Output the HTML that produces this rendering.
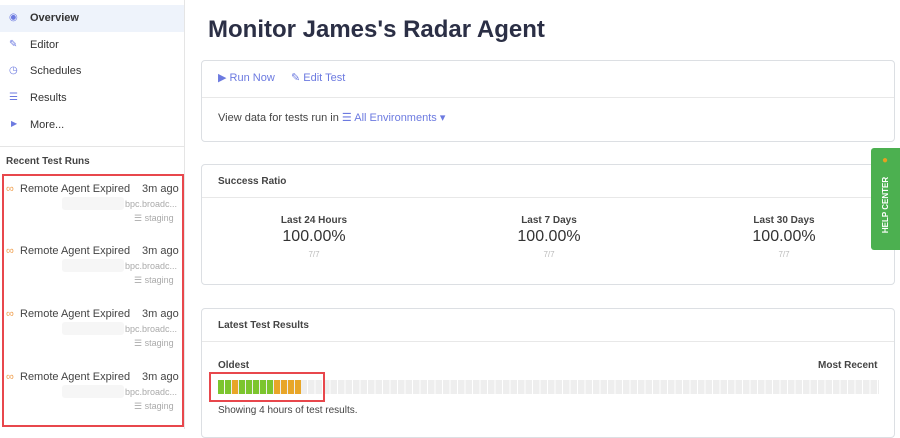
<!DOCTYPE html>
<html><head><meta charset="utf-8"><style>
*{margin:0;padding:0;box-sizing:border-box}
body{width:900px;height:429px;overflow:hidden;background:#fff;font-family:"Liberation Sans",sans-serif;position:relative;color:#444}
.a{position:absolute;white-space:nowrap}
.nav{font-size:11px;color:#333}
.card{position:absolute;left:201px;width:694px;border:1px solid #dcdfe3;border-radius:4px;background:#fff}
.blue{color:#6c7ae0}
.lbl{font-size:10px;font-weight:bold;color:#444}
.big{font-size:16px;color:#333}
.sm{font-size:8px;color:#bbb}
.run{font-size:11px;color:#444}
.gray{font-size:9px;color:#aaa}
.blur{position:absolute;background:#f6f6f6;height:13px;width:62px;left:62px;border-radius:3px}
</style></head><body>
<div class="a" style="left:0;top:0;width:185px;height:429px;border-right:1px solid #e5e5e5"></div>
<div class="a" style="left:0;top:5px;width:184px;height:27px;background:#eef3fb"></div>
<div class="a nav" style="left:9px;top:12px;color:#6c7ae0;font-size:10px">&#9673;</div>
<div class="a nav" style="left:30px;top:12px;font-weight:bold">Overview</div>
<div class="a nav" style="left:9px;top:39px;color:#6c7ae0;font-size:10px">&#9998;</div>
<div class="a nav" style="left:30px;top:39px">Editor</div>
<div class="a nav" style="left:9px;top:65px;color:#6c7ae0;font-size:10px">&#9719;</div>
<div class="a nav" style="left:30px;top:65px">Schedules</div>
<div class="a nav" style="left:9px;top:92px;color:#6c7ae0;font-size:10px">&#9776;</div>
<div class="a nav" style="left:30px;top:92px">Results</div>
<div class="a nav" style="left:11px;top:119px;color:#6c7ae0;font-size:8px">&#9654;</div>
<div class="a nav" style="left:30px;top:119px">More...</div>
<div class="a" style="left:0;top:146px;width:185px;border-top:1px solid #e5e5e5"></div>
<div class="a" style="left:6px;top:156px;font-size:10px;font-weight:bold;color:#444">Recent Test Runs</div>
<div class="a" style="left:2px;top:174px;width:182px;height:253px;border:2px solid #e8474c"></div>

<div class="a" style="left:0;top:183px;width:185px;height:62px">
<div class="a run" style="left:6px;top:0;color:#f0a050">&#8734;</div><div class="a run" style="left:20px;top:0">Remote Agent Expired</div><div class="a run" style="left:142px;top:0">3m ago</div>
<div class="blur" style="top:14px"></div><div class="a gray" style="left:125px;top:16px">bpc.broadc...</div>
<div class="a gray" style="left:134px;top:30px">&#9776; staging</div></div>
<div class="a" style="left:0;top:245px;width:185px;height:62px">
<div class="a run" style="left:6px;top:0;color:#f0a050">&#8734;</div><div class="a run" style="left:20px;top:0">Remote Agent Expired</div><div class="a run" style="left:142px;top:0">3m ago</div>
<div class="blur" style="top:14px"></div><div class="a gray" style="left:125px;top:16px">bpc.broadc...</div>
<div class="a gray" style="left:134px;top:30px">&#9776; staging</div></div>
<div class="a" style="left:0;top:308px;width:185px;height:62px">
<div class="a run" style="left:6px;top:0;color:#f0a050">&#8734;</div><div class="a run" style="left:20px;top:0">Remote Agent Expired</div><div class="a run" style="left:142px;top:0">3m ago</div>
<div class="blur" style="top:14px"></div><div class="a gray" style="left:125px;top:16px">bpc.broadc...</div>
<div class="a gray" style="left:134px;top:30px">&#9776; staging</div></div>
<div class="a" style="left:0;top:371px;width:185px;height:56px">
<div class="a run" style="left:6px;top:0;color:#f0a050">&#8734;</div><div class="a run" style="left:20px;top:0">Remote Agent Expired</div><div class="a run" style="left:142px;top:0">3m ago</div>
<div class="blur" style="top:14px"></div><div class="a gray" style="left:125px;top:16px">bpc.broadc...</div>
<div class="a gray" style="left:134px;top:30px">&#9776; staging</div></div>

<div class="a" style="left:208px;top:16px;font-size:24px;font-weight:bold;color:#2b2f45">Monitor James's Radar Agent</div>

<div class="card" style="top:60px;height:82px">
<div class="a blue" style="left:16px;top:10px;font-size:11px">&#9654; Run Now</div>
<div class="a blue" style="left:89px;top:10px;font-size:11px">&#9998; Edit Test</div>
<div class="a" style="left:0;top:36px;width:692px;border-top:1px solid #e8e8e8"></div>
<div class="a" style="left:16px;top:50px;font-size:11px;color:#444">View data for tests run in <span class="blue">&#9776; All Environments &#9662;</span></div>
</div>

<div class="card" style="top:164px;height:121px">
<div class="a lbl" style="left:16px;top:11px">Success Ratio</div>
<div class="a" style="left:0;top:32px;width:692px;border-top:1px solid #e8e8e8"></div>
<div class="a" style="left:37px;top:50px;width:150px;text-align:center"><div class="lbl">Last 24 Hours</div><div class="big" style="margin-top:2px">100.00%</div><div class="sm" style="margin-top:4px">7/7</div></div>
<div class="a" style="left:272px;top:50px;width:150px;text-align:center"><div class="lbl">Last 7 Days</div><div class="big" style="margin-top:2px">100.00%</div><div class="sm" style="margin-top:4px">7/7</div></div>
<div class="a" style="left:507px;top:50px;width:150px;text-align:center"><div class="lbl">Last 30 Days</div><div class="big" style="margin-top:2px">100.00%</div><div class="sm" style="margin-top:4px">7/7</div></div>
</div>

<div class="card" style="top:308px;height:130px">
<div class="a lbl" style="left:16px;top:11px">Latest Test Results</div>
<div class="a" style="left:0;top:32px;width:692px;border-top:1px solid #e8e8e8"></div>
<div class="a lbl" style="left:16px;top:51px">Oldest</div>
<div class="a lbl" style="left:616px;top:51px">Most Recent</div>
<div class="a" style="left:16px;top:71px;width:661px;height:14px;background:repeating-linear-gradient(90deg,#eeeeee 0 6.5px,#fff 6.5px 7.5px)"></div>
<div class="a" style="left:16px;top:71px;height:14px;display:flex;gap:1px">
<i style="width:6px;background:#7cc52e"></i><i style="width:6px;background:#7cc52e"></i><i style="width:6px;background:#e8a628"></i><i style="width:6px;background:#7cc52e"></i><i style="width:6px;background:#7cc52e"></i><i style="width:6px;background:#7cc52e"></i><i style="width:6px;background:#7cc52e"></i><i style="width:6px;background:#7cc52e"></i><i style="width:6px;background:#e8a628"></i><i style="width:6px;background:#e8a628"></i><i style="width:6px;background:#e8a628"></i><i style="width:6px;background:#e8a628"></i></div>
<div class="a" style="left:16px;top:96px;font-size:10px;color:#444">Showing 4 hours of test results.</div>
</div>
<div class="a" style="left:209px;top:372px;width:116px;height:30px;border:2px solid #e8474c"></div>

<div class="a" style="left:871px;top:148px;width:29px;height:102px;background:#4cb050;border-radius:3px 0 0 3px"></div>
<div class="a" style="left:882px;top:155px;font-size:10px;color:#e6a020">&#9679;</div>
<div class="a" style="left:871px;top:243px;transform-origin:0 0;transform:rotate(-90deg);width:76px;text-align:center;font-size:8px;font-weight:bold;color:#fff;line-height:29px">HELP CENTER</div>
</body></html>
